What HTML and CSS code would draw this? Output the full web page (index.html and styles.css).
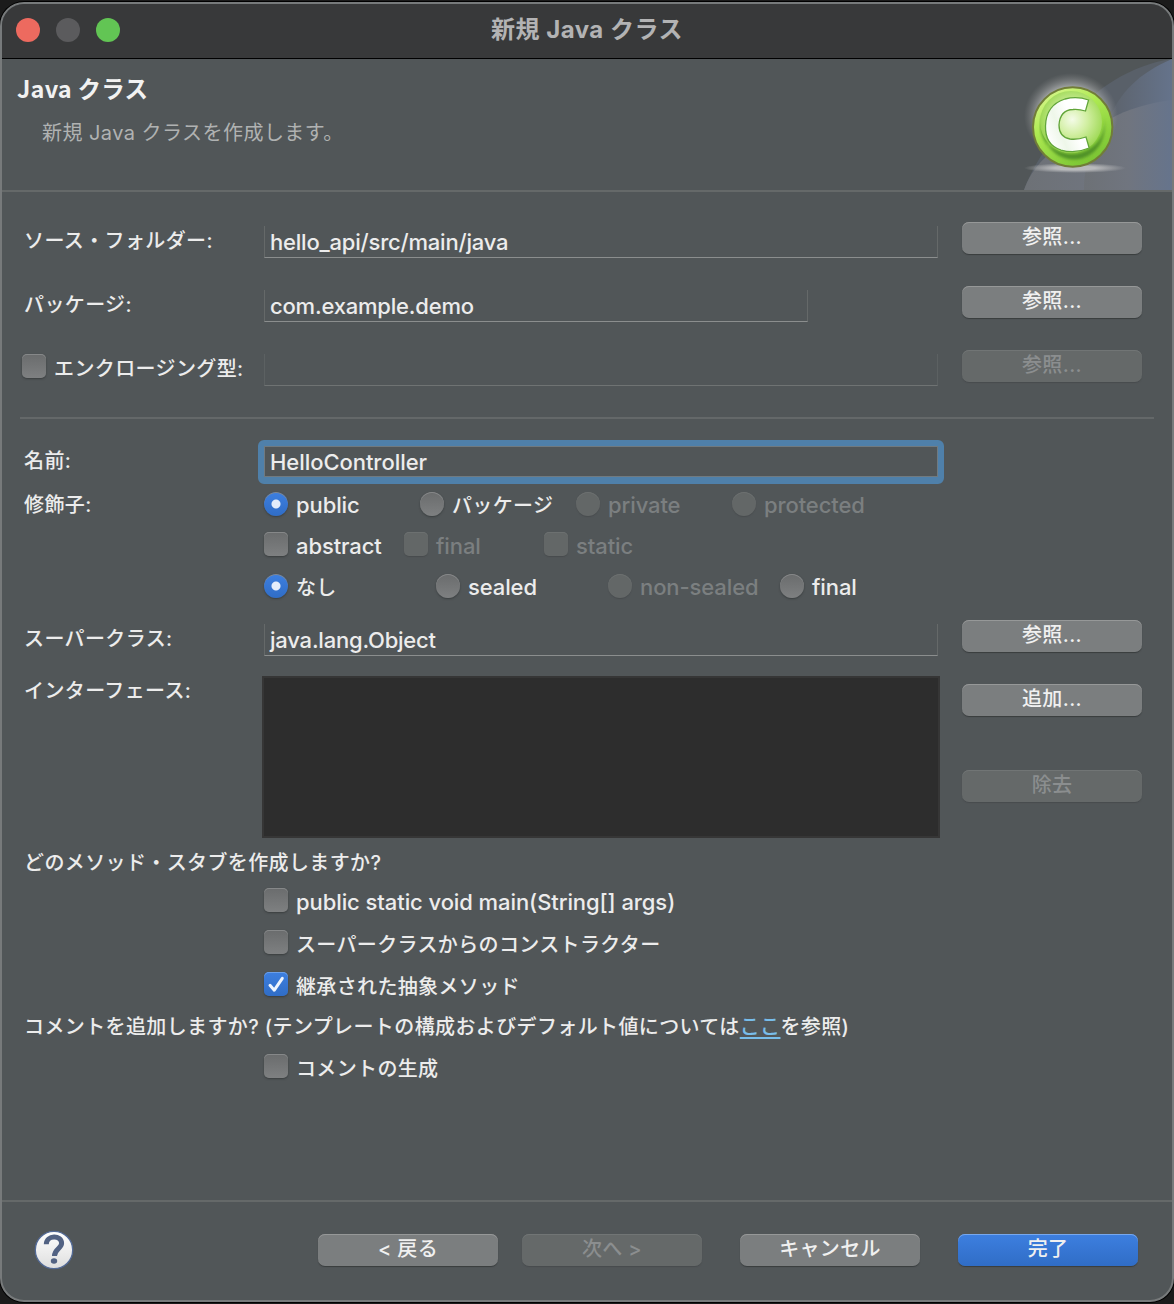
FILE: index.html
```html
<!DOCTYPE html>
<html lang="ja">
<head>
<meta charset="utf-8">
<title>新規 Java クラス</title>
<link rel="stylesheet" href="styles.css">
</head>
<body>
<main class="window">
  <div class="titlebar">
    <div class="lights"><i class="light red"></i><i class="light gray"></i><i class="light green"></i></div>
    <h1 class="title">新規 Java クラス</h1>
  </div>
  <header class="header">
    <div class="heading">
      <h2>Java クラス</h2>
      <p>新規 Java クラスを作成します。</p>
    </div>
    <svg class="banner" width="150" height="131" viewBox="0 0 150 131">
      <defs>
        <linearGradient id="sky" x1="0" x2="1"><stop offset="0" stop-color="#6d7176"/><stop offset=".5" stop-color="#70757f"/><stop offset="1" stop-color="#66748c"/></linearGradient>
        <linearGradient id="sky2" x1="0" x2="1"><stop offset="0" stop-color="#5c626a"/><stop offset="1" stop-color="#65738b"/></linearGradient>
        <radialGradient id="halo"><stop offset=".68" stop-color="#d4d6d6" stop-opacity=".6"/><stop offset="1" stop-color="#999" stop-opacity="0"/></radialGradient>
        <radialGradient id="shade"><stop offset=".4" stop-color="#b9babc"/><stop offset="1" stop-color="#b9babc" stop-opacity="0"/></radialGradient>
        <radialGradient id="ball" cx=".52" cy=".46" r=".6"><stop offset="0" stop-color="#f4fbe8"/><stop offset=".4" stop-color="#d2efa3"/><stop offset=".8" stop-color="#a5dc5f"/><stop offset="1" stop-color="#8cc744"/></radialGradient>
        <linearGradient id="rim" x1="0" y1="0" x2=".6" y2="1"><stop offset="0" stop-color="#e3fa9e"/><stop offset=".45" stop-color="#aeea52"/><stop offset="1" stop-color="#7cc634"/></linearGradient>
        <linearGradient id="letter" x1="0" x2="1" y1=".7" y2=".2"><stop offset="0" stop-color="#fff"/><stop offset=".3" stop-color="#eef7e9"/><stop offset=".6" stop-color="#fff"/></linearGradient>
        <filter id="soft"><feGaussianBlur stdDeviation="1.8"/></filter>
      </defs>
      <path d="M2 131C14 97 66 12 150 0V131Z" fill="#596069"/>
      <path d="M2 131C10 108 28 89 60 76L150 42V131Z" fill="url(#sky)"/>
      <path d="M150 0C117 14 97 34 87 61L84 84L150 90Z" fill="url(#sky2)"/>
      <path d="M62 131C62 117 64 106 68 98L88 60C105 50 127 44 150 41V131Z" fill="url(#sky)"/>
      <ellipse cx="49" cy="57" rx="47" ry="43" fill="url(#halo)"/>
      <ellipse cx="53" cy="109" rx="51" ry="5" fill="url(#shade)"/>
      <circle cx="50.700" cy="68" r="39.700" fill="url(#rim)" stroke="#717d38" stroke-width="2"/>
      <path d="M75 43C86 58 85 78 69 89C54 99 35 96 24 82C31 99 51 105 66 97C86 86 87 59 75 43Z" fill="#4f9127" filter="url(#soft)"/>
      <path d="M25 48C16 60 16 76 26 87Z" fill="#62a72f" filter="url(#soft)"/>
      <ellipse cx="49" cy="63" rx="31" ry="31" fill="url(#ball)"/>
      <path d="M66.600 41Q55 37 43 40Q24 46 23.500 67Q23 86 39 91Q53 95 67.200 89L64 78Q55 81 48 80Q37 78 37 66Q38 51 51 50.500Q57 50 63.500 52Z" fill="url(#letter)" stroke="#62a53a" stroke-width="1.300"/>
    </svg>
  </header>

  <section class="form">
    <div class="row path-row">
      <label class="label">ソース・フォルダー:</label>
      <div class="field">hello_api/src/main/java</div>
      <button class="btn">参照...</button>
    </div>
    <div class="row path-row">
      <label class="label">パッケージ:</label>
      <div class="field short">com.example.demo</div>
      <button class="btn">参照...</button>
    </div>
    <div class="row path-row">
      <label class="label with-box"><i class="box"></i><span>エンクロージング型:</span></label>
      <div class="field off"></div>
      <button class="btn off">参照...</button>
    </div>
    <hr class="divider">
    <div class="row name-row">
      <label class="label">名前:</label>
      <div class="focus">HelloController</div>
    </div>
    <div class="modifiers">
      <label class="label">修飾子:</label>
      <div class="options">
        <div class="line access">
          <span class="opt"><i class="radio on"></i>public</span>
          <span class="opt"><i class="radio"></i><b class="jp">パッケージ</b></span>
          <span class="opt off"><i class="radio"></i>private</span>
          <span class="opt off"><i class="radio"></i>protected</span>
        </div>
        <div class="line flags">
          <span class="opt"><i class="box"></i>abstract</span>
          <span class="opt off"><i class="box"></i>final</span>
          <span class="opt off"><i class="box"></i>static</span>
        </div>
        <div class="line sealing">
          <span class="opt"><i class="radio on"></i><b class="jp">なし</b></span>
          <span class="opt"><i class="radio"></i>sealed</span>
          <span class="opt off"><i class="radio"></i>non-sealed</span>
          <span class="opt"><i class="radio"></i>final</span>
        </div>
      </div>
    </div>
    <div class="row super-row">
      <label class="label">スーパークラス:</label>
      <div class="field">java.lang.Object</div>
      <button class="btn">参照...</button>
    </div>
    <div class="row interfaces">
      <label class="label">インターフェース:</label>
      <div class="list"></div>
      <div class="actions"><button class="btn">追加...</button><button class="btn off">除去</button></div>
    </div>
    <p class="question stubs">どのメソッド・スタブを作成しますか?</p>
    <div class="checks">
      <span class="opt"><i class="box"></i><b class="main-sig">public static void main(String[] args)</b></span>
      <span class="opt"><i class="box"></i><b class="jp">スーパークラスからのコンストラクター</b></span>
      <span class="opt"><i class="box checked"><svg width="24" height="24" viewBox="0 0 24 24"><path d="M6 13.300L10.300 18.200L18.300 6.300" fill="none" stroke="#eef4fd" stroke-width="3" stroke-linecap="round" stroke-linejoin="round"/></svg></i><b class="jp">継承された抽象メソッド</b></span>
    </div>
    <p class="question comments">コメントを追加しますか? (テンプレートの構成およびデフォルト値については<a>ここ</a>を参照)</p>
    <div class="checks last">
      <span class="opt"><i class="box"></i><b class="jp">コメントの生成</b></span>
    </div>
  </section>

  <footer class="footer">
    <svg class="help" width="40" height="40" viewBox="0 0 40 40">
      <defs><linearGradient id="hg" x1="0" y1="0" x2="0" y2="1"><stop offset="0" stop-color="#fff"/><stop offset="1" stop-color="#dedede"/></linearGradient></defs>
      <circle cx="20" cy="20" r="18.700" fill="url(#hg)" stroke="#536a96" stroke-width="1.300"/>
      <path d="M12.300 14.200C12.500 4.700 27.600 4.700 27.600 13.300C27.600 18.600 20.500 18.800 20.500 26" fill="none" stroke="#526283" stroke-width="5"/>
      <ellipse cx="20" cy="31" rx="3.200" ry="2.700" fill="#526283"/>
    </svg>
    <div class="nav">
      <button class="btn">&lt; 戻る</button>
      <button class="btn off">次へ &gt;</button>
    </div>
    <div class="finish">
      <button class="btn">キャンセル</button>
      <button class="btn primary">完了</button>
    </div>
  </footer>
</main>
</body>
</html>
```
FILE: styles.css
```css
* { box-sizing: border-box; }
body {
  margin: 0;
  height: 1304px;
  padding-top: 2px;
  overflow: hidden;
  background: #1b1b1b;
  color: #ececec;
  font: 500 20px/30px Inter, "Noto Sans CJK JP", sans-serif;
}
h1, h2, p, hr { margin: 0; }
i, b { font-style: normal; font-weight: inherit; }

.window {
  width: 1174px;
  height: 1300px;
  border: 2px solid #777a7b;
  border-radius: 24px;
  box-shadow: 0 0 0 1px #000;
  background: #515658;
  overflow: hidden;
  display: flex;
  flex-direction: column;
}

.titlebar {
  flex: none;
  height: 55px;
  border-bottom: 1px solid #000;
  background: #38393a;
  display: grid;
  grid-template-columns: 200px 1fr 200px;
}
.lights { display: flex; gap: 16px; padding: 14px 0 0 14px; }
.light { width: 24px; height: 24px; border-radius: 50%; }
.red { background: #ed6a5f; }
.gray { background: #5b5b5d; }
.green { background: #62c554; }
.title {
  padding-top: 10px;
  text-align: center;
  font-size: 24px;
  line-height: 32px;
  font-weight: 700;
  letter-spacing: .5px;
  color: #b3b3b4;
}

.header {
  flex: none;
  height: 133px;
  border-bottom: 2px solid #656969;
  display: flex;
  justify-content: space-between;
}
.heading h2 {
  padding: 11px 0 0 15px;
  font: 700 23.5px/36px "Noto Sans CJK JP", sans-serif;
  letter-spacing: .2px;
  color: #f2f2f2;
}
.heading p { padding: 12px 0 0 40px; color: #b0b2b2; font-weight: 400; letter-spacing: .45px; }
.banner { display: block; }

.form { flex: none; height: 1008px; padding-top: 30px; letter-spacing: .38px; }
.row { display: grid; grid-template-columns: 262px 698px 180px; }
.label { padding: 4px 0 0 22px; white-space: nowrap; }
.path-row { height: 64px; }
.with-box { display: flex; padding: 0 0 0 20px; }
.with-box .box { margin-top: 4px; }
.with-box span { padding: 4px 0 0 8px; }

.field {
  width: 674px;
  height: 32px;
  margin-top: 4px;
  padding-left: 5px;
  border: 1px solid #656969;
  border-top: 0;
  border-bottom: 1px solid #8b8e8e;
  font-size: 22px;
  line-height: 32px;
  letter-spacing: -.2px;
}
.field.short { width: 544px; }
.field.off { border-color: #5c6162; border-bottom-color: #6f7373; }

.btn {
  width: 180px;
  height: 32px;
  padding: 0 0 2px;
  border: 0;
  border-radius: 7px;
  background: #7b7e7f;
  box-shadow: inset 0 1px #969898, 0 1px 1px #393d3e;
  color: #f0f0f0;
  font: 500 20px/28px Inter, "Noto Sans CJK JP", sans-serif;
  letter-spacing: .35px;
}
.btn.off { background: #656969; color: #8b8e8f; box-shadow: inset 0 1px #717575, 0 1px 1px #484c4e; }
.btn.primary { background: linear-gradient(#3d7fe0, #306dc6); box-shadow: inset 0 1px #78a8ed, 0 1px 1px #393d3e; }

.divider { height: 2px; margin: 3px 18px 21px; border: 0; background: #646869; }
.name-row { height: 44px; }
.name-row .label { padding-top: 6px; }
.focus {
  width: 686px;
  height: 44px;
  margin-left: -6px;
  padding-left: 6px;
  border: 6px solid #4f80aa;
  border-bottom-width: 7px;
  border-radius: 6px;
  box-shadow: inset 0 0 0 1px #707a80;
  font-size: 22px;
  line-height: 32px;
  letter-spacing: -.05px;
}

.modifiers { display: grid; grid-template-columns: 262px 1fr; height: 136px; }
.modifiers .label { padding-top: 6px; }
.options { padding-top: 8px; font-size: 22px; letter-spacing: -.1px; }
.line { display: grid; height: 41px; }
.access { grid-template-columns: 156px 156px 156px 1fr; }
.flags { grid-template-columns: 140px 140px 1fr; }
.sealing { grid-template-columns: 172px 172px 172px 1fr; }
.opt { display: flex; gap: 8px; height: 24px; line-height: 26px; white-space: nowrap; }
.opt.off { color: #7b7f80; }
.jp { padding-top: 1px; font-size: 20px; letter-spacing: .35px; }
.radio, .box {
  flex: none;
  width: 24px;
  height: 24px;
  border-radius: 50%;
  background: linear-gradient(#6a6c6d, #7e8081);
  box-shadow: inset 0 1px #868889, 0 1px 2px #393d3e;
}
.box { border-radius: 5px; }
.off .radio, .off .box { background: #636767; box-shadow: inset 0 1px #6c7070, 0 1px 1px #484c4e; }
.radio.on { background: radial-gradient(circle, #e4edfb 0 4px, transparent 5px), linear-gradient(#3d7fe0, #306dc6); }
.checked { background: linear-gradient(#3d7fe0, #306dc6); box-shadow: inset 0 1px #6b9fe9, 0 1px 2px #393d3e; }
.checked svg { display: block; }
.flags .opt { margin-top: -1px; line-height: 29px; }

.super-row { height: 56px; }
.interfaces { height: 162px; }
.interfaces .label { padding-top: 0; }
.list { width: 678px; height: 162px; margin-left: -2px; border: 2px solid #363636; background: #2d2d2d; }
.actions { display: flex; flex-direction: column; gap: 54px; padding-top: 8px; }
.question { padding-left: 22px; white-space: nowrap; }
.stubs { margin-top: 10px; }
.checks { display: flex; flex-direction: column; gap: 18px; padding: 10px 0 0 262px; }
.checks .opt { line-height: 28px; }
.main-sig { font-size: 22px; letter-spacing: -.08px; }
.comments { margin-top: 16px; }
.question a { color: #78bdea; text-decoration: underline 2px; text-underline-offset: 3px; }
.checks.last { padding-top: 12px; }

.footer { flex: 1; border-top: 2px solid #656969; display: flex; align-items: flex-start; padding-top: 32px; }
.help { flex: none; margin: -4px 244px 0 32px; }
.nav { display: flex; gap: 24px; margin-right: 38px; }
.finish { display: flex; gap: 38px; }
```
